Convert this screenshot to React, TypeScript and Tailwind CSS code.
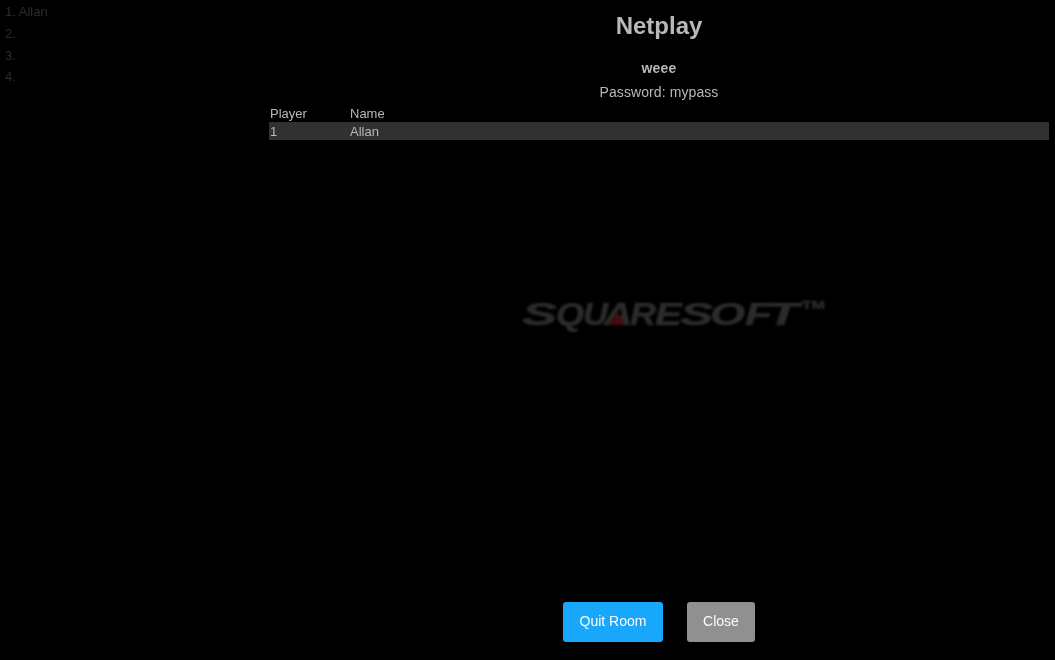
const players = ["1. Allan", "2.", "3.", "4."];

// letter position and width inside the logo, measured off the screenshot
const logoLetters = [
    { c: "S", x: 2, w: 35 },
    { c: "Q", x: 36, w: 28 },
    { c: "U", x: 63, w: 25 },
    { c: "A", x: 84, w: 28 },
    { c: "R", x: 110, w: 26 },
    { c: "E", x: 135, w: 27 },
    { c: "S", x: 160, w: 33 },
    { c: "O", x: 190, w: 35 },
    { c: "F", x: 225, w: 27 },
    { c: "T", x: 247, w: 32 },
];

function SquaresoftLogo() {
    return (
        <svg width="320" height="40" viewBox="0 0 320 40" className="block" fontFamily="'Liberation Sans', sans-serif">
            <g style={{ filter: "blur(0.9px)" }} fill="#2c2c2c" stroke="#2c2c2c" strokeWidth="0.5">
                {logoLetters.map((l, i) => (
                    <text
                        key={i}
                        x={l.x}
                        y="29"
                        textLength={l.w}
                        lengthAdjust="spacingAndGlyphs"
                        fontWeight="bold"
                        fontStyle="italic"
                        fontSize="32"
                    >
                        {l.c}
                    </text>
                ))}
                <polygon points="88,29 97,15 105,29" fill="#430d12" stroke="none" />
                <text x="282" y="13" textLength="23" lengthAdjust="spacingAndGlyphs" fontWeight="bold" fontSize="11">
                    TM
                </text>
            </g>
        </svg>
    );
}

export default function App() {
    return (
        <div className="flex h-screen w-[1055px] overflow-hidden bg-black font-['Liberation_Sans',Arial,sans-serif] text-[#bbbbbb]">
            <aside className="w-[269px] shrink-0 pl-[5px] pt-[1.4px] text-[13px] leading-[21.67px] text-[#2e2e2e] opacity-[0.99]">
                {players.map((p) => (
                    <div key={p}>{p}</div>
                ))}
            </aside>
            <main className="flex w-[780px] flex-col opacity-[0.99]">
                <h1 className="pt-[12px] text-center text-[24px] leading-[28px] font-bold">Netplay</h1>
                <div className="pt-[20px] text-center text-[14px] leading-[16px] font-bold tracking-[0.15px]">weee</div>
                <div className="pt-[8px] text-center text-[14px] leading-[16px] tracking-[0.09px]">Password: mypass</div>
                <table className="mt-[4px] w-full border-collapse text-[13px] leading-[15px]">
                    <thead>
                        <tr className="h-[18px] text-left">
                            <th className="w-[80px] pl-[1px] font-normal">Player</th>
                            <th className="pl-[1px] font-normal">Name</th>
                        </tr>
                    </thead>
                    <tbody>
                        <tr className="h-[18px] bg-[#323232]">
                            <td className="pl-[1px]">1</td>
                            <td className="pl-[1px]">Allan</td>
                        </tr>
                    </tbody>
                </table>
                <div className="flex-1 pl-[251px] pt-[156px]">
                    <SquaresoftLogo />
                </div>
                <div className="flex justify-center gap-[24px] pb-[18px]">
                    <button className="h-[40px] w-[100px] rounded-[3px] bg-[#1aa9ff] pb-[1px] text-[14px] text-white">Quit Room</button>
                    <button className="h-[40px] w-[68px] rounded-[3px] bg-[#929292] pb-[1px] text-[14px] text-white">Close</button>
                </div>
            </main>
        </div>
    );
}
